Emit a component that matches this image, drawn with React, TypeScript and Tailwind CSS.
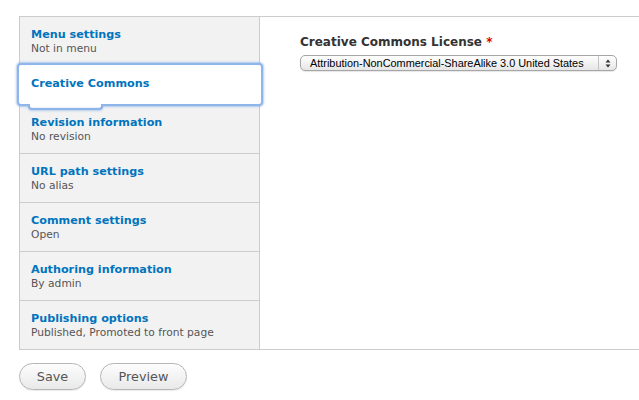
import React from "react";

const tabs = [
  { title: "Menu settings", summary: "Not in menu" },
  { title: "Creative Commons", summary: "", selected: true },
  { title: "Revision information", summary: "No revision" },
  { title: "URL path settings", summary: "No alias" },
  { title: "Comment settings", summary: "Open" },
  { title: "Authoring information", summary: "By admin" },
  { title: "Publishing options", summary: "Published, Promoted to front page", last: true },
];

export default function App() {
  return (
    <div className="w-[639px] h-[400px] overflow-hidden bg-white" style={{ fontFamily: '"DejaVu Sans", sans-serif' }}>
      <div className="pt-[16px] pl-[19px]">
        <div className="flex w-[640px] border border-r-0 border-[#cccccc]">
          <div className="w-[240px] shrink-0 bg-[#f2f2f2] border-r border-[#cccccc] flex flex-col">
            {tabs.map((t, i) =>
              t.selected ? (
                <div key={i} className="relative h-[39px] -mr-px z-10">
                  <div className="absolute left-[8px] w-[75px] top-[34px] h-[10px] border-2 border-t-0 border-[#8fb6ea] rounded-b-[4px] bg-white shadow-[0_1px_2px_rgba(120,165,230,0.5)]" />
                  <div className="absolute -left-[3px] -right-[3px] -top-[3px] -bottom-[1px] bg-white border-2 border-[#8fb6ea] rounded-[4px] shadow-[0_0_2px_1px_rgba(120,165,230,0.55)]" />
                  <div className="absolute left-[10px] w-[71px] top-[36px] h-[5px] bg-white" />
                  <div className="relative pl-[11px] pt-[11px] text-[11.2px] leading-[14px] font-bold text-[#0074bd]">
                    {t.title}
                  </div>
                </div>
              ) : (
                <div
                  key={i}
                  className={`pl-[11px] pt-[11px] pb-[9px] ${t.last ? "" : "border-b border-[#cccccc]"}`}
                >
                  <div className="text-[11.2px] leading-[14px] font-bold text-[#0074bd]">{t.title}</div>
                  <div className="text-[10.7px] leading-[14px] text-[#555555]">{t.summary}</div>
                </div>
              )
            )}
          </div>
          <div className="flex-1 pl-[40px] pt-[17px]">
            <div className="text-[12px] leading-[16px] font-bold text-[#333333]">
              Creative Commons License <span className="text-[#e00000]">*</span>
            </div>
            <div className="mt-[5px] w-[317px] h-[16px] flex items-stretch rounded-[5px] border border-[#a6a6a6] bg-gradient-to-b from-[#ffffff] to-[#e6e6e6] shadow-[0_1px_1px_rgba(0,0,0,0.1)]">
              <div
                className="flex-1 pl-[9px] text-[10.9px] leading-[14px] text-black"
                style={{ fontFamily: '"Liberation Sans", Arial, sans-serif' }}
              >
                Attribution-NonCommercial-ShareAlike 3.0 United States
              </div>
              <div className="w-[18px] border-l border-[#c4c4c4] flex items-center justify-center">
                <svg width="6" height="9" viewBox="0 0 6 9">
                  <path d="M3 0.5 L5.5 3.5 L0.5 3.5 Z" fill="#333" />
                  <path d="M3 8.5 L5.5 5.5 L0.5 5.5 Z" fill="#333" />
                </svg>
              </div>
            </div>
          </div>
        </div>
        <div className="flex gap-[14px] mt-[13px]">
          <button className="w-[67px] h-[27px] rounded-full border border-[#b5b5b5] bg-gradient-to-b from-[#fdfdfd] to-[#e9e9e9] text-[12.8px] text-[#555555] shadow-[0_1px_1px_rgba(0,0,0,0.08)]">
            Save
          </button>
          <button className="w-[87px] h-[27px] rounded-full border border-[#b5b5b5] bg-gradient-to-b from-[#fdfdfd] to-[#e9e9e9] text-[12.8px] text-[#555555] shadow-[0_1px_1px_rgba(0,0,0,0.08)]">
            Preview
          </button>
        </div>
      </div>
    </div>
  );
}
